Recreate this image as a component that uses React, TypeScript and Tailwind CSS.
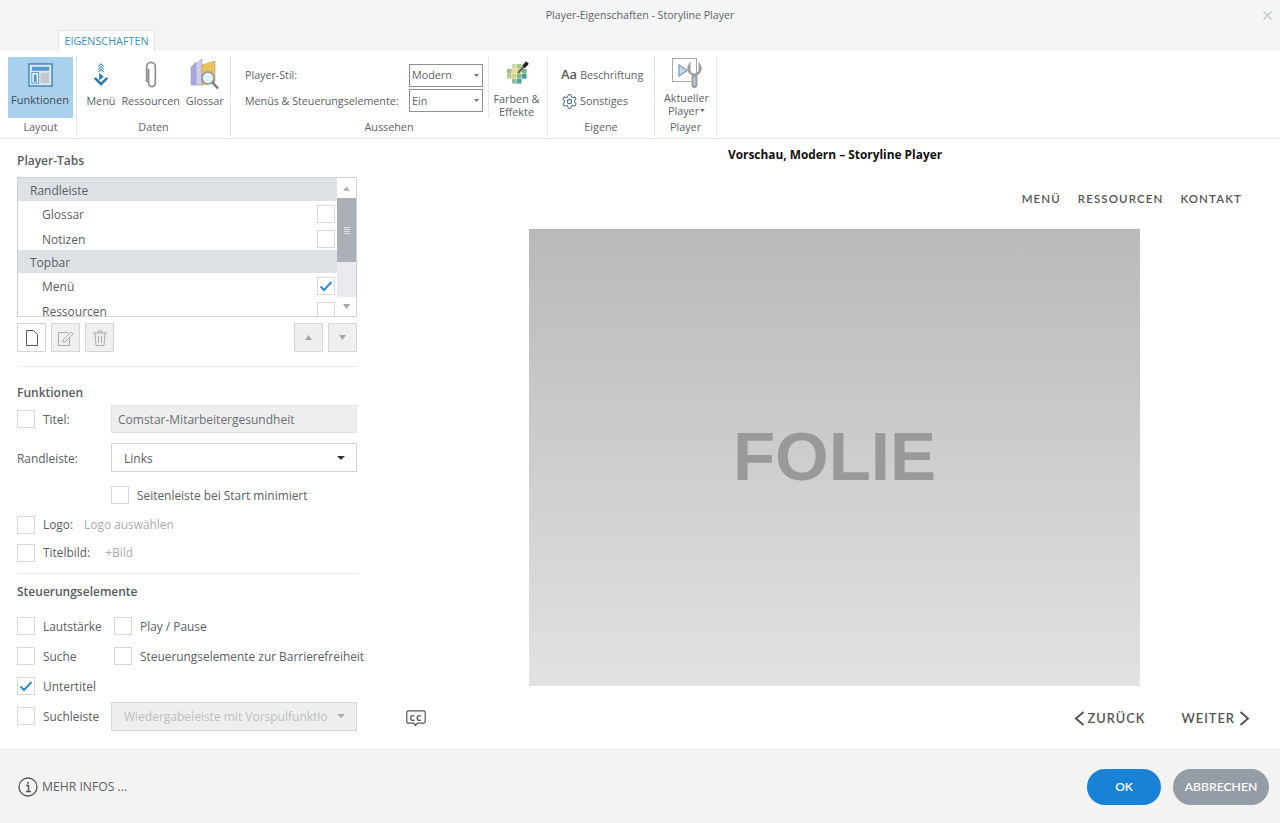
import { Settings } from "lucide-react";

function Check({ checked }: { checked?: boolean }) {
  return (
    <span className="flex h-[18px] w-[18px] shrink-0 items-center justify-center border border-[#d6d8da] bg-white">
      {checked && (
        <svg width="14" height="12" viewBox="0 0 14 12">
          <path d="M1.5 6.5 L5 10 L12.5 2" fill="none" stroke="#2f8fc4" strokeWidth="2" />
        </svg>
      )}
    </span>
  );
}

function Caret({ color = "#555", w = 8, h = 4 }: { color?: string; w?: number; h?: number }) {
  return (
    <svg width={w} height={h} viewBox="0 0 8 4" preserveAspectRatio="none">
      <path d="M0 0 H8 L4 4 Z" fill={color} />
    </svg>
  );
}

function FunktionenIcon() {
  return (
    <svg width="25" height="24" viewBox="0 0 26 25">
      <rect x="1" y="1" width="24" height="23" fill="#dbe9f3" stroke="#3d86b8" strokeWidth="1.5" />
      <rect x="4" y="4" width="18" height="4" fill="#4f9bd0" />
      <rect x="4" y="10" width="7" height="11" fill="#fff" stroke="#4f9bd0" />
      <rect x="6" y="12" width="3" height="8" fill="#4f9bd0" />
      <rect x="13" y="10" width="9" height="11" fill="#c4c8cc" />
    </svg>
  );
}

function MenuIcon() {
  return (
    <svg width="20" height="24" viewBox="0 0 20 26">
      <path d="M7 5 L10 2 L13 5 M7 8 L10 5 L13 8 M7 11 L10 8 L13 11" fill="none" stroke="#5b9fd0" strokeWidth="1.3" />
      <path d="M8 12 L13 16 L8 20 Z" fill="#2f7fbc" />
      <path d="M2 18 L10 26 L18 18 L15.5 16.5 L10 22 L4.5 16.5 Z" fill="#2b78b5" />
    </svg>
  );
}

function ClipIcon() {
  return (
    <svg width="14" height="29" viewBox="0 0 14 30">
      <path
        d="M4 8 V23 a3.5 3.5 0 0 0 7 0 V6 a4.5 4.5 0 0 0 -9 0 V22"
        fill="none"
        stroke="#8d9094"
        strokeWidth="1.8"
        transform="translate(0.5 1)"
      />
    </svg>
  );
}

function GlossarIcon() {
  return (
    <svg width="30" height="32" viewBox="0 0 30 32">
      <path d="M1 9 L6 4 V27 H1 Z" fill="#a9a8dc" stroke="#9a9ac4" strokeWidth="0.6" />
      <path d="M6 6 L12 1 V27 H6 Z" fill="#cfccee" stroke="#9a9ac4" strokeWidth="0.6" />
      <path d="M12 7 L25 3 V24 L12 27 Z" fill="#e9c25e" stroke="#c29c42" strokeWidth="0.6" />
      <circle cx="18" cy="20" r="6" fill="#e4f0f3" stroke="#8f9394" strokeWidth="1.6" />
      <path d="M22.5 24.5 L28 30.5" stroke="#75797b" strokeWidth="2.4" />
    </svg>
  );
}

const farbenCells = [
  { x: 8, y: 4, c: "#cdd9a8" },
  { x: 13, y: 4, c: "#a9c98a" },
  { x: 3, y: 9, c: "#a7bb8a" },
  { x: 8, y: 9, c: "#e5dc8c" },
  { x: 13, y: 9, c: "#d9d27a" },
  { x: 18, y: 9, c: "#7fb28a" },
  { x: 3, y: 14, c: "#b9c79a" },
  { x: 8, y: 14, c: "#cfd57f" },
  { x: 13, y: 14, c: "#7cb79a" },
  { x: 18, y: 14, c: "#3f9a98" },
  { x: 8, y: 19, c: "#8fbfa0" },
  { x: 13, y: 19, c: "#4fa3a0" },
];

function FarbenIcon() {
  return (
    <svg width="26" height="26" viewBox="0 0 26 26">
      {farbenCells.map((cell) => (
        <rect key={`${cell.x}-${cell.y}`} x={cell.x} y={cell.y} width="4.6" height="4.6" fill={cell.c} />
      ))}
      <path d="M14 13 L20 6.5" stroke="#5a5f62" strokeWidth="2" />
      <path d="M19.5 7 L23.5 2.5" stroke="#222" strokeWidth="3.6" />
    </svg>
  );
}

function PlayerIcon() {
  return (
    <svg width="32" height="32" viewBox="0 0 32 32">
      <rect x="1.5" y="1.5" width="24" height="23" fill="#fff" stroke="#a8abae" />
      <path d="M8 8 L16 13.5 L8 19 Z" fill="#c7dcec" stroke="#7fa4c2" strokeWidth="1.4" />
      <path d="M18.5 7.5 A6.3 6.3 0 1 0 28.5 7.5 V12.5 A5 5 0 0 1 18.5 12.5 Z" fill="#9aa0a5" stroke="#9aa0a5" strokeWidth="2" />
      <rect x="20.5" y="17" width="6" height="14" rx="3" fill="#9aa0a5" />
      <rect x="22.5" y="20" width="2" height="8" fill="#c4c8cc" />
    </svg>
  );
}

function RibbonLarge({ icon, label }: { icon: React.ReactNode; label: React.ReactNode }) {
  return (
    <div className="flex flex-col items-center">
      <div className="flex h-[36px] items-center">{icon}</div>
      <div className="mt-[2px] text-center text-[10.8px] leading-[13px] text-[#5c6266]">{label}</div>
    </div>
  );
}

function RibbonGroup({ label, className, children }: { label: string; className: string; children: React.ReactNode }) {
  return (
    <div className={`flex h-[81px] flex-col border-r border-[#e4e6e8] ${className}`}>
      <div className="h-[62px]">{children}</div>
      <div className="mt-[2px] text-center text-[10.8px] leading-[14px] text-[#5c6266]">{label}</div>
    </div>
  );
}

function Ribbon() {
  return (
    <div className="flex h-[88px] items-start border-b border-[#e4e6e8] bg-white pt-[5px]">
      <RibbonGroup label="Layout" className="w-[77px] pl-[8px] pr-[3px]">
        <div className="mt-[1px] flex h-[61px] flex-col items-center bg-[#a9d1ee] pr-[1px] pt-[6px]">
          <FunktionenIcon />
          <div className="mt-[5px] text-[11px] text-[#44494d]">Funktionen</div>
        </div>
      </RibbonGroup>
      <RibbonGroup label="Daten" className="w-[154px]">
        <div className="flex justify-center gap-[6px] pl-[3px]">
          <RibbonLarge icon={<MenuIcon />} label="Menü" />
          <RibbonLarge icon={<ClipIcon />} label="Ressourcen" />
          <RibbonLarge icon={<GlossarIcon />} label="Glossar" />
        </div>
      </RibbonGroup>
      <RibbonGroup label="Aussehen" className="w-[317px]">
        <div className="flex h-[62px]">
          <div className="flex w-[258px] flex-col gap-[2px] border-r border-[#e4e6e8] pl-[14px] pt-[8px]">
            <div className="flex h-[23px] items-center">
              <span className="w-[164px] text-[10.7px] text-[#5c6266]">Player-Stil:</span>
              <div className="flex h-[23px] w-[74px] items-center justify-between border border-[#8d8f90] pl-[2px] pr-[3px] text-[10.8px] text-[#5c6266]">
                Modern
                <Caret color="#777" w={5} h={3} />
              </div>
            </div>
            <div className="flex h-[23px] items-center">
              <span className="w-[164px] whitespace-nowrap pt-[2px] text-[10.7px] text-[#5c6266]">Menüs &amp; Steuerungselemente:</span>
              <div className="flex h-[23px] w-[74px] items-center justify-between border border-[#8d8f90] pl-[2px] pr-[3px] text-[10.8px] text-[#5c6266]">
                <span className="pt-[2px]">Ein</span>
                <Caret color="#777" w={5} h={3} />
              </div>
            </div>
          </div>
          <div className="flex flex-1 flex-col items-center pr-[3px] pt-[4px]">
            <div className="flex h-[33px] items-start">
              <FarbenIcon />
            </div>
            <div className="mt-[1px] text-center text-[10.8px] leading-[13px] text-[#5c6266]">
              Farben &amp;
              <br />
              Effekte
            </div>
          </div>
        </div>
      </RibbonGroup>
      <RibbonGroup label="Eigene" className="w-[107px]">
        <div className="flex flex-col gap-[10px] pl-[13px] pt-[11px]">
          <div className="flex h-[16px] items-center gap-[3px]">
            <span className="text-[13px] font-semibold text-[#55595c]">Aa</span>
            <span className="text-[10.7px] text-[#5c6266]">Beschriftung</span>
          </div>
          <div className="flex h-[17px] items-center gap-[2px]">
            <Settings size={17} strokeWidth={1.5} color="#4f6f8c" />
            <span className="text-[10.8px] text-[#5c6266]">Sonstiges</span>
          </div>
        </div>
      </RibbonGroup>
      <RibbonGroup label="Player" className="w-[62px]">
        <div className="flex flex-col items-center pl-[2px] pt-[1px]">
          <PlayerIcon />
          <div className="mt-[2px] text-center text-[10.8px] leading-[13px] text-[#5c6266]">
            Aktueller
            <div className="flex items-center justify-center gap-[1px]">
              Player
              <svg width="5" height="3" viewBox="0 0 6 4">
                <path d="M0 0 H6 L3 4 Z" fill="#666" />
              </svg>
            </div>
          </div>
        </div>
      </RibbonGroup>
    </div>
  );
}

function TabRow({ label, header, checked }: { label: string; header?: boolean; checked?: boolean }) {
  if (header) {
    return <div className="flex h-[23px] items-center bg-[#dee2e6] pl-[12px] pt-[2px] text-[12px] text-[#5a6064]">{label}</div>;
  }
  return (
    <div className="flex h-[24.5px] items-center justify-between pl-[24px] pr-[2px] pt-[2px] text-[12px] text-[#5a6064]">
      <span className="pt-[2px]">{label}</span>
      <Check checked={checked} />
    </div>
  );
}

function TabList() {
  return (
    <div className="flex h-[140px] w-[340px] border border-[#cfd3d6] bg-white">
      <div className="flex-1 overflow-hidden">
        <TabRow label="Randleiste" header />
        <TabRow label="Glossar" />
        <TabRow label="Notizen" />
        <TabRow label="Topbar" header />
        <TabRow label="Menü" checked />
        <div className="h-[19px] overflow-hidden">
          <TabRow label="Ressourcen" />
        </div>
      </div>
      <div className="flex w-[19px] flex-col bg-[#e9ebee]">
        <div className="flex h-[20px] items-center justify-center bg-white">
          <svg width="7" height="5" viewBox="0 0 7 5">
            <path d="M0 5 H7 L3.5 0 Z" fill="#b5b9bc" />
          </svg>
        </div>
        <div className="flex h-[64px] flex-col items-center justify-center gap-[1px] bg-[#a9b1b7]">
          <span className="h-px w-[6px] bg-[#dfe2e4]" />
          <span className="h-px w-[6px] bg-[#dfe2e4]" />
          <span className="h-px w-[6px] bg-[#dfe2e4]" />
          <span className="h-px w-[6px] bg-[#dfe2e4]" />
        </div>
        <div className="flex-1" />
        <div className="flex h-[19px] items-center justify-center bg-white">
          <svg width="7" height="5" viewBox="0 0 7 5">
            <path d="M0 0 H7 L3.5 5 Z" fill="#9fa4a8" />
          </svg>
        </div>
      </div>
    </div>
  );
}

function SquareButton({ white, children }: { white?: boolean; children: React.ReactNode }) {
  return (
    <button
      className={`flex h-[29px] w-[29px] items-center justify-center border border-[#d3d5d7] ${
        white ? "bg-white" : "bg-[#efefef]"
      }`}
    >
      {children}
    </button>
  );
}

function TabButtons() {
  return (
    <div className="mt-[6px] flex w-[340px] items-center">
      <div className="flex gap-[5px]">
        <SquareButton white>
          <svg width="12" height="16" viewBox="0 0 12 16">
            <path d="M.5 .5 H7.5 L11.5 4.5 V15.5 H.5 Z" fill="none" stroke="#555" />
          </svg>
        </SquareButton>
        <SquareButton>
          <svg width="16" height="16" viewBox="0 0 16 16">
            <path d="M.5 2.5 H10 M.5 2.5 V15.5 H11.5 V8" fill="none" stroke="#a9acae" />
            <path d="M5 10 L13 2 L15 4 L7 12 H5 Z" fill="none" stroke="#a9acae" />
          </svg>
        </SquareButton>
        <SquareButton>
          <svg width="14" height="16" viewBox="0 0 14 16">
            <path d="M0 3 H14 M5 3 V1 H9 V3 M2 3 L3 15.5 H11 L12 3 M5.5 6 V13 M8.5 6 V13" fill="none" stroke="#a9acae" />
          </svg>
        </SquareButton>
      </div>
      <div className="ml-auto flex gap-[5px]">
        <SquareButton>
          <svg width="7" height="5" viewBox="0 0 7 5">
            <path d="M0 5 H7 L3.5 0 Z" fill="#a3a7aa" />
          </svg>
        </SquareButton>
        <SquareButton>
          <svg width="7" height="5" viewBox="0 0 7 5">
            <path d="M0 0 H7 L3.5 5 Z" fill="#a3a7aa" />
          </svg>
        </SquareButton>
      </div>
    </div>
  );
}

function SectionTitle({ children, className }: { children: React.ReactNode; className: string }) {
  return <h3 className={`text-[12px] font-semibold leading-[16px] text-[#565c60] ${className}`}>{children}</h3>;
}

function LabelCheck({ label, checked, width, low }: { label: string; checked?: boolean; width?: string; low?: boolean }) {
  return (
    <div className={`flex items-center gap-[8px] ${width ?? ""}`}>
      <Check checked={checked} />
      <span className={`whitespace-nowrap text-[11.9px] text-[#5a6064] ${low ? "pt-[2px]" : ""}`}>{label}</span>
    </div>
  );
}

function LeftPanel() {
  return (
    <div className="w-[390px] shrink-0 pl-[17px] pt-[14px]">
      <SectionTitle className="">Player-Tabs</SectionTitle>
      <div className="mt-[8px]">
        <TabList />
      </div>
      <TabButtons />
      <div className="mt-[14px] h-px w-[341px] bg-[#eaebec]" />

      <SectionTitle className="mt-[18px]">Funktionen</SectionTitle>
      <div className="mt-[4px] flex h-[28px] w-[340px] items-center">
        <LabelCheck label="Titel:" width="w-[94px]" low />
        <div className="flex h-[28px] flex-1 items-center border border-[#e0e1e2] bg-[#eeeeee] pl-[6px] pt-[2px] text-[12px] text-[#6a6f73]">
          Comstar-Mitarbeitergesundheit
        </div>
      </div>
      <div className="mt-[10px] flex h-[29px] w-[340px] items-center">
        <span className="w-[94px] pt-[2px] text-[11.9px] text-[#5a6064]">Randleiste:</span>
        <div className="flex h-[29px] flex-1 items-center justify-between border border-[#cdd2d6] pl-[12px] pr-[11px] text-[12px] text-[#5a6064]">
          <span className="pt-[2px]">Links</span>
          <Caret color="#333" />
        </div>
      </div>
      <div className="ml-[94px] mt-[13px]">
        <LabelCheck label="Seitenleiste bei Start minimiert" low />
      </div>
      <div className="mt-[11px] flex h-[18px] items-center">
        <LabelCheck label="Logo:" />
        <span className="ml-[11px] text-[11.9px] text-[#a9acaf]">Logo auswählen</span>
      </div>
      <div className="mt-[10px] flex h-[18px] items-center">
        <LabelCheck label="Titelbild:" />
        <span className="ml-[15px] text-[11.9px] text-[#a9acaf]">+Bild</span>
      </div>
      <div className="mt-[11px] h-px w-[341px] bg-[#eaebec]" />

      <SectionTitle className="mt-[10px]">Steuerungselemente</SectionTitle>
      <div className="mt-[17px] flex h-[18px]">
        <LabelCheck label="Lautstärke" width="w-[97px]" low />
        <LabelCheck label="Play / Pause" low />
      </div>
      <div className="mt-[12px] flex h-[18px]">
        <LabelCheck label="Suche" width="w-[97px]" low />
        <LabelCheck label="Steuerungselemente zur Barrierefreiheit" low />
      </div>
      <div className="mt-[12px] flex h-[18px]">
        <LabelCheck label="Untertitel" checked low />
      </div>
      <div className="mt-[7px] flex h-[29px] w-[340px] items-center">
        <LabelCheck label="Suchleiste" width="w-[94px]" low />
        <div className="flex h-[29px] flex-1 items-center justify-between border border-[#d5d7d8] bg-[#eeeeee] pl-[12px] pr-[11px] text-[12px] text-[#bcbfc1]">
          <span className="w-[203px] overflow-hidden whitespace-nowrap pt-[2px]">Wiedergabeleiste mit Vorspulfunktion</span>
          <Caret color="#aaa" />
        </div>
      </div>
    </div>
  );
}

function CcIcon() {
  return (
    <svg width="20" height="17" viewBox="0 0 20 17">
      <path d="M2.5 .8 H17.5 a1.7 1.7 0 0 1 1.7 1.7 V11.5 a1.7 1.7 0 0 1 -1.7 1.7 H11.5 L9.5 15.5 L8 13.2 H2.5 a1.7 1.7 0 0 1 -1.7 -1.7 V2.5 a1.7 1.7 0 0 1 1.7 -1.7 Z" fill="none" stroke="#555" strokeWidth="1.2" />
      <text x="10" y="10.5" textAnchor="middle" fontSize="8.5" fontWeight="700" fontFamily="'Open Sans', sans-serif" fill="#555">
        CC
      </text>
    </svg>
  );
}

function Preview() {
  return (
    <div className="flex flex-1 flex-col pt-[7px]">
      <div className="text-center text-[11.9px] font-bold leading-[16px] text-[#111]">
        Vorschau, Modern – Storyline Player
      </div>
      <div className="mt-[28px] flex justify-end gap-[17px] pr-[38px] text-[11.5px] font-semibold leading-[17px] tracking-[1.1px] text-[#555] [font-family:Lato,sans-serif]">
        <span>MENÜ</span>
        <span>RESSOURCEN</span>
        <span>KONTAKT</span>
      </div>
      <div className="ml-[139px] mt-[22px] flex h-[457px] w-[611px] items-center justify-center bg-gradient-to-b from-[#b9b9b9] to-[#e2e2e2]">
        <span className="pb-[2px] text-[69px] font-bold leading-none text-[#999999] [font-family:'Liberation_Sans',sans-serif]">
          FOLIE
        </span>
      </div>
      <div className="mt-[23px] flex items-center pl-[16px] pr-[30px] text-[12.8px] font-semibold tracking-[1px] text-[#555] [font-family:Lato,sans-serif]">
        <CcIcon />
        <div className="ml-auto flex items-center gap-[3px]">
          <svg width="11" height="15" viewBox="0 0 11 15">
            <path d="M9.5 1 L2 7.5 L9.5 14" fill="none" stroke="#555" strokeWidth="2" />
          </svg>
          ZURÜCK
        </div>
        <div className="ml-[36px] flex items-center gap-[4px]">
          WEITER
          <svg width="11" height="15" viewBox="0 0 11 15">
            <path d="M1.5 1 L9 7.5 L1.5 14" fill="none" stroke="#555" strokeWidth="2" />
          </svg>
        </div>
      </div>
    </div>
  );
}

function Footer() {
  return (
    <div className="flex h-[74px] items-center border-t border-[#e6e7e8] bg-[#f3f3f3] pl-[18px] pr-[11px]">
      <svg width="20" height="20" viewBox="0 0 20 20">
        <circle cx="10" cy="10" r="9" fill="none" stroke="#555" strokeWidth="1.3" />
        <path d="M8 8.5 H10.5 V14 M8 14.5 H13" fill="none" stroke="#555" strokeWidth="1.3" />
        <circle cx="10" cy="5.7" r="1" fill="#555" />
      </svg>
      <span className="ml-[4px] pt-[2px] text-[12.2px] text-[#5a6064]">MEHR INFOS ...</span>
      <button className="ml-auto h-[36px] w-[74px] rounded-full bg-[#1883d6] pt-[1px] text-[12px] font-semibold text-white [font-family:Lato,sans-serif]">
        OK
      </button>
      <button className="ml-[12px] h-[36px] w-[96px] rounded-full bg-[#949ca5] pt-[1px] text-[12.2px] font-semibold text-white [font-family:Lato,sans-serif]">
        ABBRECHEN
      </button>
    </div>
  );
}

export default function App() {
  return (
    <div className="flex h-[823px] w-[1280px] flex-col overflow-hidden bg-white [font-family:'Open_Sans',sans-serif]">
      <div className="relative h-[51px] bg-[#f3f5f7]">
        <div className="pt-[8px] text-center text-[10.6px] leading-[14px] text-[#5c6266]">
          Player-Eigenschaften - Storyline Player
        </div>
        <svg className="absolute right-[8px] top-[11px]" width="9" height="9" viewBox="0 0 9 9">
          <path d="M.5 .5 L8.5 8.5 M8.5 .5 L.5 8.5" stroke="#c4c7ca" strokeWidth="1.4" />
        </svg>
        <div className="absolute bottom-0 left-[58px] flex h-[21px] w-[97px] items-center justify-center border border-b-0 border-[#e2e5e8] bg-white text-[10.8px] text-[#3d8fbd]">
          EIGENSCHAFTEN
        </div>
      </div>
      <Ribbon />
      <div className="flex flex-1">
        <LeftPanel />
        <Preview />
      </div>
      <Footer />
    </div>
  );
}
